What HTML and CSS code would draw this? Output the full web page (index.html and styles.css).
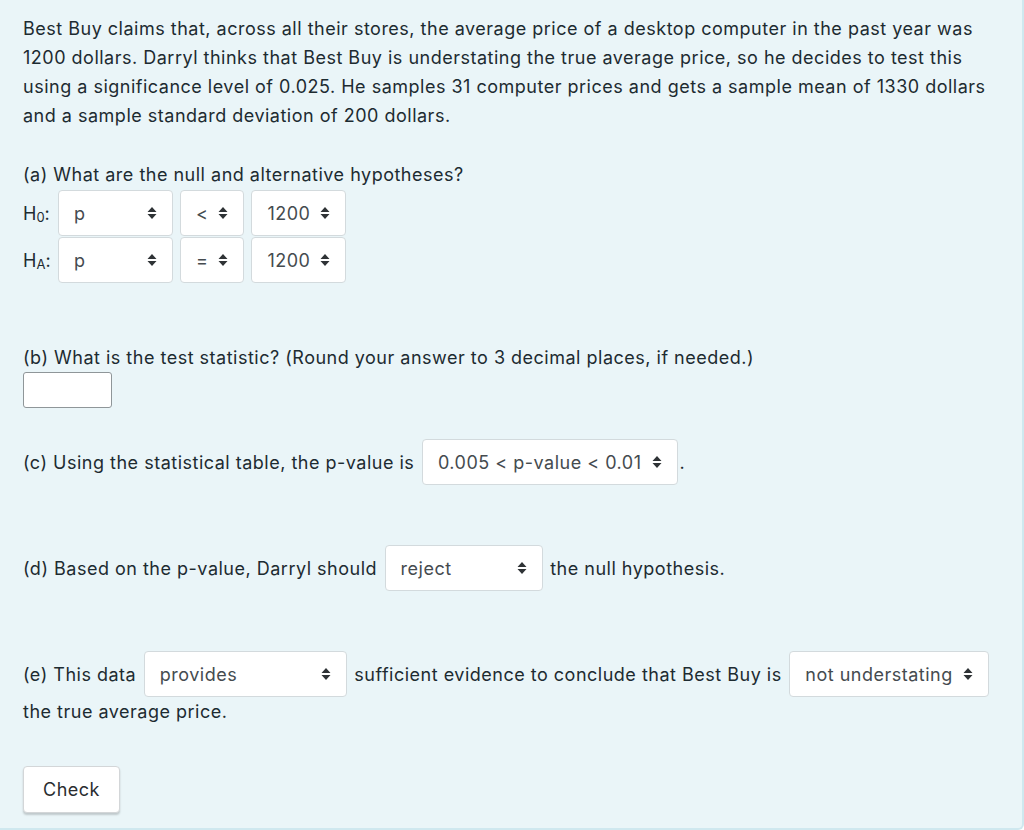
FILE: index.html
```html
<!DOCTYPE html>
<html>
<head>
<meta charset="utf-8">
<link rel="stylesheet" href="styles.css">
</head>
<body>
<div class="panel">
  <p class="intro">Best Buy claims that, across all their stores, the average price of a desktop computer in the past year was 1200 dollars. Darryl thinks that Best Buy is understating the true average price, so he decides to test this using a significance level of 0.025. He samples 31 computer prices and gets a sample mean of 1330 dollars and a sample standard deviation of 200 dollars.</p>

  <p class="q qa">(a) What are the null and alternative hypotheses?</p>
  <div class="hyp">
    <div class="hrow">
      <span class="hlabel">H<sub>0</sub>:</span>
      <span class="sel w-p"><span class="val">p</span><svg class="arr" viewBox="0 0 10 14"><path d="M0.5 6L5 1L9.5 6Z M0.5 8L5 13L9.5 8Z"/></svg></span>
      <span class="sel"><span class="val">&lt;</span><svg class="arr" viewBox="0 0 10 14"><path d="M0.5 6L5 1L9.5 6Z M0.5 8L5 13L9.5 8Z"/></svg></span>
      <span class="sel"><span class="val">1200</span><svg class="arr" viewBox="0 0 10 14"><path d="M0.5 6L5 1L9.5 6Z M0.5 8L5 13L9.5 8Z"/></svg></span>
    </div>
    <div class="hrow">
      <span class="hlabel">H<sub>A</sub>:</span>
      <span class="sel w-p"><span class="val">p</span><svg class="arr" viewBox="0 0 10 14"><path d="M0.5 6L5 1L9.5 6Z M0.5 8L5 13L9.5 8Z"/></svg></span>
      <span class="sel"><span class="val">=</span><svg class="arr" viewBox="0 0 10 14"><path d="M0.5 6L5 1L9.5 6Z M0.5 8L5 13L9.5 8Z"/></svg></span>
      <span class="sel"><span class="val">1200</span><svg class="arr" viewBox="0 0 10 14"><path d="M0.5 6L5 1L9.5 6Z M0.5 8L5 13L9.5 8Z"/></svg></span>
    </div>
  </div>

  <p class="q qb">(b) What is the test statistic? (Round your answer to 3 decimal places, if needed.)</p>
  <div class="answer"></div>

  <p class="q qc">(c) Using the statistical table, the p-value is <span class="sel"><span class="val">0.005 &lt; p-value &lt; 0.01</span><svg class="arr" viewBox="0 0 10 14"><path d="M0.5 6L5 1L9.5 6Z M0.5 8L5 13L9.5 8Z"/></svg></span>.</p>

  <p class="q qd">(d) Based on the p-value, Darryl should <span class="sel w-reject"><span class="val">reject</span><svg class="arr" viewBox="0 0 10 14"><path d="M0.5 6L5 1L9.5 6Z M0.5 8L5 13L9.5 8Z"/></svg></span> the null hypothesis.</p>

  <p class="q qe">(e) This data <span class="sel w-provides"><span class="val">provides</span><svg class="arr" viewBox="0 0 10 14"><path d="M0.5 6L5 1L9.5 6Z M0.5 8L5 13L9.5 8Z"/></svg></span> sufficient evidence to conclude that Best Buy is <span class="sel"><span class="val">not understating</span><svg class="arr" viewBox="0 0 10 14"><path d="M0.5 6L5 1L9.5 6Z M0.5 8L5 13L9.5 8Z"/></svg></span> the true average price.</p>

  <button class="check">Check</button>
</div>
</body>
</html>
```
FILE: styles.css
```css
html, body {
  margin: 0;
  padding: 0;
  background: #ffffff;
}
body {
  font-family: Inter, "Liberation Sans", Arial, sans-serif;
  font-size: 18px;
  letter-spacing: 0.5px;
  color: #1d2b31;
}
.panel {
  box-sizing: border-box;
  width: 1024px;
  height: 830px;
  background: #eaf5f8;
  border-right: 2px solid #cfe8ef;
  border-bottom: 2px solid #cfe8ef;
  border-bottom-right-radius: 6px;
  padding: 14px 20px 0 23px;
  overflow: hidden;
}
p {
  margin: 0;
}
.intro {
  line-height: 29px;
}
.q {
  line-height: 29px;
}
.qa {
  margin-top: 30px;
}
.hyp {
  display: flex;
  flex-direction: column;
  gap: 1px;
  margin-top: 1px;
}
.hrow {
  display: flex;
  align-items: center;
  gap: 7px;
}
.hlabel {
  width: 28px;
  line-height: 29px;
  letter-spacing: 0;
}
.hlabel sub {
  font-size: 13px;
  vertical-align: -2px;
  line-height: 0;
}
.sel {
  box-sizing: border-box;
  display: inline-flex;
  align-items: center;
  justify-content: space-between;
  gap: 10px;
  height: 46px;
  padding: 0 15px 0 15px;
  background: #ffffff;
  border: 1px solid #d3dadd;
  border-radius: 4px;
  color: #454b4f;
  vertical-align: baseline;
  line-height: 29px;
}
.arr {
  width: 10px;
  height: 14px;
  fill: #2f3336;
  flex: none;
}
.w-p { width: 115px; }
.w-reject { width: 158px; }
.w-provides { width: 203px; }
.qb {
  margin-top: 60px;
}
.answer {
  box-sizing: border-box;
  width: 89px;
  height: 36px;
  background: #ffffff;
  border: 1px solid #8f9699;
  border-radius: 3px;
}
.qc {
  margin-top: 31px;
}
.qd {
  margin-top: 60px;
}
.qe {
  margin-top: 60px;
}
.qc .sel, .qd .sel, .qe .sel {
  margin: 0 2px;
}
.check {
  display: block;
  margin-top: 40px;
  box-sizing: border-box;
  width: 97px;
  height: 47px;
  background: #ffffff;
  border: 1px solid #d3d6d8;
  border-radius: 4px;
  box-shadow: 0 2px 2px rgba(0, 0, 0, 0.18);
  font-family: inherit;
  font-size: 18px;
  letter-spacing: 0.5px;
  color: #2a2d30;
}
```
